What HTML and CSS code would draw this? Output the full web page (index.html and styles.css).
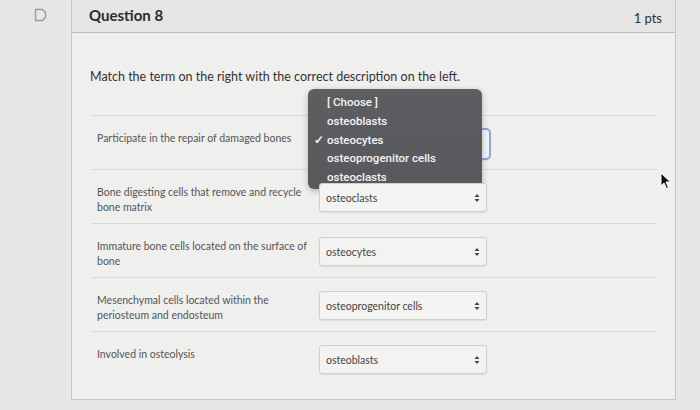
FILE: index.html
```html
<!DOCTYPE html>
<html>
<head>
<meta charset="utf-8">
<link rel="stylesheet" href="styles.css">
</head>
<body>
<div class="page">
  <div class="gutter">
    <svg class="flag" width="13" height="14" viewBox="0 0 13 14"><path d="M1.5 1.5 H8.5 L11.5 4.5 V9.5 L8.5 12.5 H1.5 Z" fill="none" stroke="#9a9a9a" stroke-width="1.4" stroke-linejoin="round"/></svg>
  </div>
  <div class="card">
    <div class="header">
      <span class="qtitle">Question 8</span>
      <span class="pts">1 pts</span>
    </div>
    <div class="body">
      <p class="prompt">Match the term on the right with the correct description on the left.</p>
      <div class="rows">
        <div class="row">
          <div class="desc">Participate in the repair of damaged bones</div>
          <div class="selwrap">
            <div class="select focused"><svg class="arrows" width="6" height="10" viewBox="0 0 6 10"><path d="M3 1 L5.5 4 H0.5 Z M3 9 L5.5 6 H0.5 Z" fill="#444"/></svg></div>
            <div class="popup">
              <div class="opt">[ Choose ]</div>
              <div class="opt">osteoblasts</div>
              <div class="opt checked"><span class="check">✓</span>osteocytes</div>
              <div class="opt">osteoprogenitor cells</div>
              <div class="opt">osteoclasts</div>
            </div>
          </div>
        </div>
        <div class="row">
          <div class="desc">Bone digesting cells that remove and recycle bone matrix</div>
          <div class="selwrap">
            <div class="select"><span>osteoclasts</span><svg class="arrows" width="6" height="10" viewBox="0 0 6 10"><path d="M3 1 L5.5 4 H0.5 Z M3 9 L5.5 6 H0.5 Z" fill="#444"/></svg></div>
          </div>
        </div>
        <div class="row">
          <div class="desc">Immature bone cells located on the surface of bone</div>
          <div class="selwrap">
            <div class="select"><span>osteocytes</span><svg class="arrows" width="6" height="10" viewBox="0 0 6 10"><path d="M3 1 L5.5 4 H0.5 Z M3 9 L5.5 6 H0.5 Z" fill="#444"/></svg></div>
          </div>
        </div>
        <div class="row">
          <div class="desc">Mesenchymal cells located within the periosteum and endosteum</div>
          <div class="selwrap">
            <div class="select"><span>osteoprogenitor cells</span><svg class="arrows" width="6" height="10" viewBox="0 0 6 10"><path d="M3 1 L5.5 4 H0.5 Z M3 9 L5.5 6 H0.5 Z" fill="#444"/></svg></div>
          </div>
        </div>
        <div class="row">
          <div class="desc">Involved in osteolysis</div>
          <div class="selwrap">
            <div class="select"><span>osteoblasts</span><svg class="arrows" width="6" height="10" viewBox="0 0 6 10"><path d="M3 1 L5.5 4 H0.5 Z M3 9 L5.5 6 H0.5 Z" fill="#444"/></svg></div>
          </div>
        </div>
      </div>
    </div>
  </div>
  <svg class="cursor" width="12" height="18" viewBox="0 0 12 18"><path d="M1 1 V14 L4 11 L6.5 16.5 L8.5 15.5 L6 10 H10.5 Z" fill="#111" stroke="#fff" stroke-width="1"/></svg>
</div>
</body>
</html>
```

FILE: styles.css
```css
html, body {
  margin: 0;
  padding: 0;
}
body {
  background: #e7e7e6;
  font-family: Lato, "Liberation Sans", sans-serif;
  color: #333;
  width: 700px;
  height: 410px;
  overflow: hidden;
}
.page {
  position: relative;
  display: flex;
  height: 410px;
}
.gutter {
  width: 71px;
  flex: none;
  padding-top: 8px;
  box-sizing: border-box;
}
.flag {
  display: block;
  margin-left: 34px;
}
.card {
  width: 605px;
  height: 400px;
  box-sizing: border-box;
  border: 1px solid #c6c6c6;
  border-top: none;
  background: #efefee;
  flex: none;
}
.header {
  height: 33px;
  box-sizing: border-box;
  background: #e5e5e4;
  border-bottom: 1px solid #bdbdbc;
  display: flex;
  justify-content: space-between;
  align-items: center;
  padding: 0 13px 0 17px;
}
.qtitle {
  font-size: 15px;
  font-weight: 700;
  color: #2b2b2b;
  margin-top: -2px;
}
.pts {
  font-size: 13px;
  color: #333;
  margin-top: 4px;
}
.body {
  padding: 36px 18px 0 18px;
}
.prompt {
  margin: 0 0 30px 0;
  font-size: 12.5px;
  line-height: 16px;
  color: #333;
}
.rows {
  margin-left: 2px;
}
.row {
  display: flex;
  border-top: 1px solid #d9d9d8;
  padding: 12px 0 10px 5px;
  height: 31px;
}
.desc {
  width: 222px;
  flex: none;
  font-size: 10.5px;
  line-height: 15px;
  color: #555;
  padding-top: 3px;
  padding-right: 4px;
  box-sizing: border-box;
}
.selwrap {
  position: relative;
}
.select {
  width: 168px;
  height: 29px;
  box-sizing: border-box;
  border: 1px solid #cfcfce;
  border-radius: 3px;
  background: #f3f3f2;
  box-shadow: 0 1px 1px rgba(0,0,0,0.08);
  display: flex;
  align-items: center;
  justify-content: space-between;
  padding: 0 6px 0 6px;
  font-size: 10.5px;
  color: #444;
  margin-top: 1px;
}
.select.focused {
  width: 172px;
  height: 32px;
  margin-top: 0;
  border: 2px solid #86a9dc;
  border-radius: 5px;
  justify-content: flex-end;
}
.popup {
  position: absolute;
  top: -39px;
  left: -11px;
  width: 174px;
  height: 100px;
  box-sizing: border-box;
  background: linear-gradient(#5d5e62, #58595d);
  border-radius: 6px;
  box-shadow: 0 2px 6px rgba(0,0,0,0.25);
  padding: 4px 0 0 19px;
  font-family: Roboto, "Liberation Sans", sans-serif;
  font-size: 11.5px;
  font-weight: 500;
  color: #f4f4f4;
}
.opt {
  position: relative;
  height: 18.8px;
  line-height: 18.8px;
}
.check {
  position: absolute;
  left: -13px;
  font-size: 12px;
  font-weight: 700;
}
.cursor {
  position: absolute;
  left: 660px;
  top: 172px;
}
```
